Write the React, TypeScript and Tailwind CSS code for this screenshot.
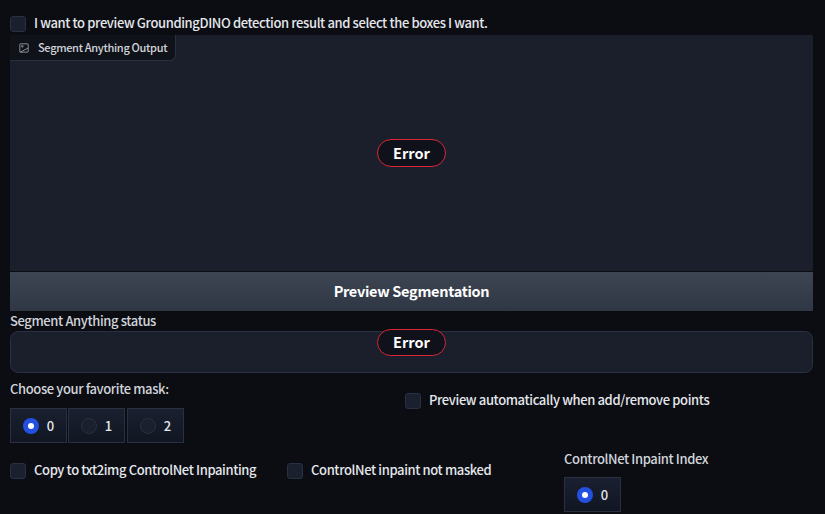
import React from 'react';

const font = { fontFamily: '"Noto Sans CJK SC", "Noto Sans", sans-serif' };

function Checkbox({ label }: { label: string }) {
  return (
    <label className="flex items-start gap-2 h-[20px]">
      <span className="w-4 h-4 mt-[2px] shrink-0 rounded-[3px] border border-[#293041] bg-[#1a202e]" />
      <span className="text-[13px] font-medium tracking-[-0.38px] leading-[18px] text-[#e5e7eb]">{label}</span>
    </label>
  );
}

function Radio({ value, checked }: { value: string; checked?: boolean }) {
  return (
    <div className="w-[57px] h-[35px] flex items-center justify-center gap-[8px] border border-[#293041] bg-gradient-to-b from-[#1a2030] to-[#111622]">
      {checked ? (
        <span className="w-4 h-4 rounded-full bg-[#2350e0] flex items-center justify-center">
          <span className="w-[6px] h-[6px] rounded-full bg-white" />
        </span>
      ) : (
        <span className="w-4 h-4 rounded-full border border-[#293041] bg-[#1a202e]" />
      )}
      <span className="text-[13px] font-medium text-[#e5e7eb]">{value}</span>
    </div>
  );
}

function ErrorBadge({ small }: { small?: boolean }) {
  return (
    <span className={`${small ? 'h-[27px] pb-[1px]' : 'h-[28px]'} px-[15.5px] flex items-center rounded-full border border-[#dc2635] bg-[#0f121a] text-white text-[14.5px] font-semibold`}>
      Error
    </span>
  );
}

export default function App() {
  return (
    <div style={font} className="w-[825px] h-[514px] overflow-hidden bg-[#0b0d13] pl-[10px] pr-[12px] pt-[14px]">
      <Checkbox label="I want to preview GroundingDINO detection result and select the boxes I want." />

      {/* output image */}
      <div className="relative mt-[1px] h-[236px] bg-[#1a1f2b] flex items-center justify-center">
        <div className="absolute left-0 top-0 h-[26px] w-[166px] pl-[9px] flex items-center gap-[9px] bg-[#0f1219] border-r border-b border-[#293041] rounded-br-[6px]">
          <svg width="10" height="10" viewBox="0 0 24 24" fill="none" stroke="#9ca3af" strokeWidth="2">
            <rect x="2" y="2" width="20" height="20" rx="1" />
            <circle cx="8" cy="8" r="2" />
            <path d="M22 12L3 22" />
          </svg>
          <span className="text-[11px] font-medium tracking-[-0.33px] text-[#d1d5db]">Segment Anything Output</span>
        </div>
        <ErrorBadge />
      </div>

      <button className="block w-full mt-[1px] h-[39px] pb-[2px] bg-gradient-to-b from-[#3d4552] to-[#2f3644] text-white text-[14.5px] tracking-[-0.3px] font-semibold">
        Preview Segmentation
      </button>

      <div className="text-[13px] font-medium tracking-[-0.38px] leading-[20px] text-[#d1d5db]">Segment Anything status</div>
      <div className="relative h-[42px] rounded-[8px] border border-[#293041] bg-[#1a1f2b] flex justify-center">
        <div className="absolute -top-[3px]">
          <ErrorBadge small />
        </div>
      </div>

      <div className="flex mt-[6px]">
        <div className="w-[395px]">
          <div className="text-[13px] font-medium tracking-[-0.38px] leading-[20px] text-[#d1d5db]">Choose your favorite mask:</div>
          <div className="flex gap-[1px] mt-[9px]">
            <Radio value="0" checked />
            <Radio value="1" />
            <div className="ml-[1px]">
              <Radio value="2" />
            </div>
          </div>
        </div>
        <div className="pt-[12px]">
          <Checkbox label="Preview automatically when add/remove points" />
        </div>
      </div>

      <div className="flex mt-[6px]">
        <div className="w-[277px] pt-[12px]">
          <Checkbox label="Copy to txt2img ControlNet Inpainting" />
        </div>
        <div className="w-[277px] pt-[12px]">
          <Checkbox label="ControlNet inpaint not masked" />
        </div>
        <div>
          <div className="text-[13px] font-medium tracking-[-0.38px] leading-[20px] text-[#d1d5db]">ControlNet Inpaint Index</div>
          <div className="mt-[8px]">
            <Radio value="0" checked />
          </div>
        </div>
      </div>
    </div>
  );
}
